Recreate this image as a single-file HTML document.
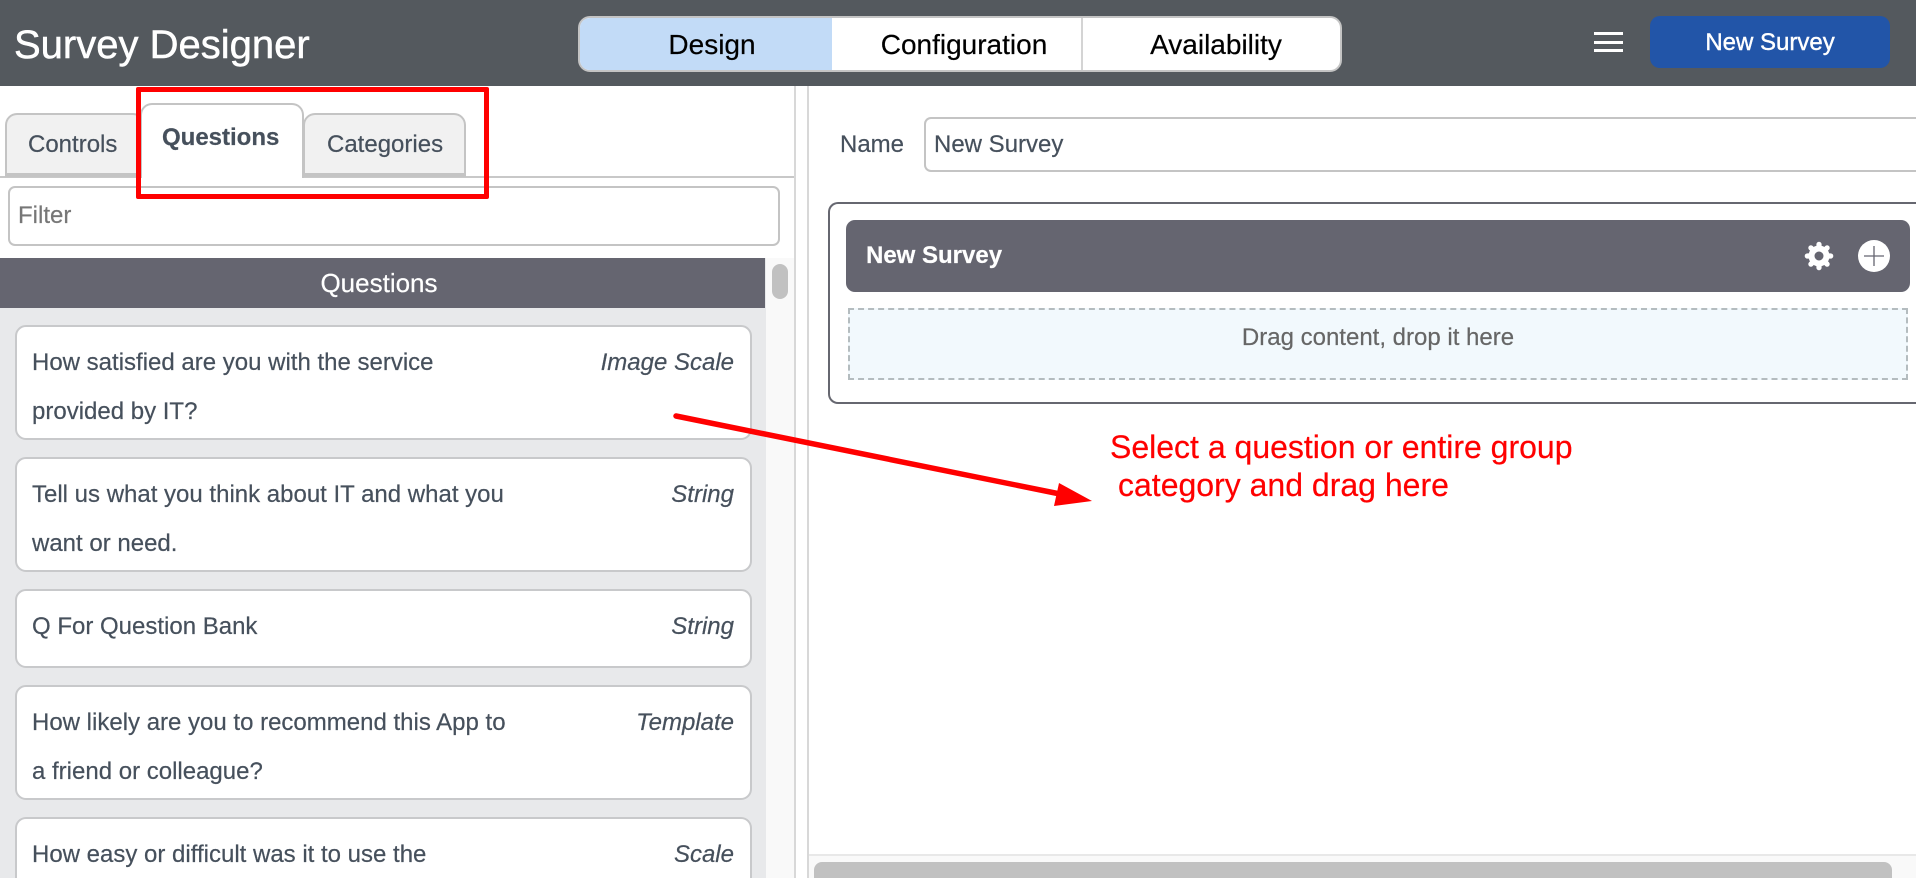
<!DOCTYPE html>
<html>
<head>
<meta charset="utf-8">
<style>
html,body{margin:0;padding:0;width:1916px;height:878px;overflow:hidden;background:#fff}
body{position:relative;font-family:"Liberation Sans",Arial,sans-serif;font-size:24px;color:#46505c}
div,span{position:absolute;box-sizing:border-box}
.t{white-space:nowrap;line-height:30px;height:30px;-webkit-text-stroke:.2px currentColor}
.c{text-align:center}
.tab{background:#f1f1f1;border:2px solid #c4c4c4;border-bottom:4px solid #c4c4c4;border-radius:12px 12px 0 0}
.card{left:15px;width:737px;background:#fff;border:2px solid #c8c9cb;border-radius:11px}
.ty{right:1182px;font-style:italic}
</style>
</head>
<body>
<!-- header -->
<div style="left:0;top:0;width:1916px;height:86px;background:#54595e"></div>
<div class="t" style="left:14px;top:29px;font-size:40px;line-height:32px;height:32px;color:#fff;-webkit-text-stroke:.5px #fff">Survey Designer</div>
<div style="left:578px;top:16px;width:764px;height:56px;background:#fff;border:2px solid #c4c4c4;border-radius:12px;overflow:hidden">
  <div style="left:0;top:0;width:252px;height:52px;background:#c2dbf7"></div>
  <div style="left:501px;top:0;width:2px;height:52px;background:#d4d4d4"></div>
</div>
<div class="t c" style="left:578px;width:268px;top:30px;font-size:28px;color:#000">Design</div>
<div class="t c" style="left:832px;width:264px;top:30px;font-size:28px;color:#000">Configuration</div>
<div class="t c" style="left:1084px;width:264px;top:30px;font-size:28px;color:#000">Availability</div>
<div style="left:1594px;top:32px;width:29px;height:3px;background:#fff"></div>
<div style="left:1594px;top:41px;width:29px;height:3px;background:#fff"></div>
<div style="left:1594px;top:49px;width:29px;height:3px;background:#fff"></div>
<div style="left:1650px;top:16px;width:240px;height:52px;background:#2255a8;border-radius:10px"></div>
<div class="t c" style="left:1650px;width:240px;top:28px;color:#fff;-webkit-text-stroke:.4px #fff">New Survey</div>

<!-- tabs -->
<div style="left:0;top:176px;width:795px;height:2px;background:#c8c8c8"></div>
<div class="tab" style="left:5px;top:113px;width:140px;height:64px"></div>
<div class="t" style="left:28px;top:130px">Controls</div>
<div class="tab" style="left:303px;top:113px;width:163px;height:64px"></div>
<div class="t" style="left:327px;top:130px">Categories</div>
<div style="left:140px;top:103px;width:164px;height:75px;background:#fff;border:2px solid #c4c4c4;border-bottom:0;border-radius:12px 12px 0 0"></div>
<div class="t" style="left:162px;top:123px;font-weight:bold">Questions</div>

<!-- filter -->
<div style="left:8px;top:186px;width:772px;height:60px;background:#fff;border:2px solid #c4c4c4;border-radius:7px"></div>
<div class="t" style="left:18px;top:201px;color:#777">Filter</div>

<!-- list -->
<div style="left:0;top:258px;width:766px;height:620px;background:#e8e9eb"></div>
<div style="left:0;top:258px;width:765px;height:50px;background:#656570"></div>
<div class="t c" style="left:0;width:758px;top:268px;color:#fff;font-size:26px">Questions</div>
<div style="left:766px;top:258px;width:29px;height:620px;background:#f9f9f9"></div>
<div style="left:772px;top:264px;width:16px;height:35px;background:#c1c1c1;border-radius:8px"></div>

<div class="card" style="top:325px;height:115px"></div>
<div class="t" style="left:32px;top:348px">How satisfied are you with the service</div>
<div class="t" style="left:32px;top:397px">provided by IT?</div>
<div class="t ty" style="top:348px">Image Scale</div>

<div class="card" style="top:457px;height:115px"></div>
<div class="t" style="left:32px;top:480px">Tell us what you think about IT and what you</div>
<div class="t" style="left:32px;top:529px">want or need.</div>
<div class="t ty" style="top:480px">String</div>

<div class="card" style="top:589px;height:79px"></div>
<div class="t" style="left:32px;top:612px">Q For Question Bank</div>
<div class="t ty" style="top:612px">String</div>

<div class="card" style="top:685px;height:115px"></div>
<div class="t" style="left:32px;top:708px">How likely are you to recommend this App to</div>
<div class="t" style="left:32px;top:757px">a friend or colleague?</div>
<div class="t ty" style="top:708px">Template</div>

<div class="card" style="top:817px;height:61px;border-bottom:0;border-radius:11px 11px 0 0"></div>
<div class="t" style="left:32px;top:840px">How easy or difficult was it to use the</div>
<div class="t ty" style="top:840px">Scale</div>

<!-- dividers -->
<div style="left:794px;top:86px;width:2px;height:792px;background:#d8d8d8"></div>
<div style="left:807px;top:86px;width:2px;height:792px;background:#d8d8d8"></div>

<!-- right pane -->
<div class="t" style="left:840px;top:130px">Name</div>
<div style="left:924px;top:117px;width:992px;height:55px;background:#fff;border:2px solid #c4c4c4;border-right:0;border-radius:7px 0 0 7px"></div>
<div class="t" style="left:934px;top:130px">New Survey</div>

<div style="left:828px;top:202px;width:1088px;height:202px;background:#fff;border:2px solid #666770;border-right:0;border-radius:10px 0 0 10px"></div>
<div style="left:846px;top:220px;width:1064px;height:72px;background:#656570;border-radius:9px"></div>
<div class="t" style="left:866px;top:241px;color:#fff;font-weight:bold">New Survey</div>
<svg style="position:absolute;left:1804px;top:241px" width="30" height="30" viewBox="0 0 30 30"><circle cx="15" cy="15" r="7.500" fill="none" stroke="#fff" stroke-width="6"/><g stroke="#fff" stroke-width="5.200" stroke-linecap="round"><path d="M15 7V3.300M15 23V26.700M7 15H3.300M23 15H26.700M9.300 9.300L6.900 6.900M20.700 20.700L23.100 23.100M20.700 9.300L23.100 6.900M9.300 20.700L6.900 23.100"/></g></svg>
<svg style="position:absolute;left:1858px;top:240px" width="32" height="32" viewBox="0 0 32 32"><circle cx="16" cy="16" r="16" fill="#fff"/><path d="M16 6v20M6 16h20" stroke="#656570" stroke-width="1.300" fill="none"/></svg>

<div style="left:848px;top:308px;width:1060px;height:72px;background:#f2f9fd;border:2px dashed #b4bcbf"></div>
<div class="t c" style="left:848px;width:1060px;top:323px;color:#666">Drag content, drop it here</div>

<!-- bottom scrollbar -->
<div style="left:809px;top:854px;width:1107px;height:24px;background:#f9f9f9;border-top:2px solid #e8e8e8"></div>
<div style="left:814px;top:862px;width:1078px;height:16px;background:#c1c1c1;border-radius:8px 8px 0 0"></div>

<!-- annotations -->
<div style="left:136px;top:87px;width:353px;height:112px;border:5px solid #f00;border-radius:2px"></div>
<svg style="position:absolute;left:0;top:0" width="1916" height="878"><path d="M676 416L1065 495" stroke="#f00" stroke-width="5.500" stroke-linecap="round" fill="none"/><path d="M1059 483L1092 501L1054 506Z" fill="#f00"/></svg>
<div class="t" style="left:1110px;top:431px;font-size:32px;color:#f00;height:32px;line-height:32px">Select a question or entire group</div>
<div class="t" style="left:1118px;top:469px;font-size:32px;color:#f00;height:32px;line-height:32px">category and drag here</div>
</body>
</html>
